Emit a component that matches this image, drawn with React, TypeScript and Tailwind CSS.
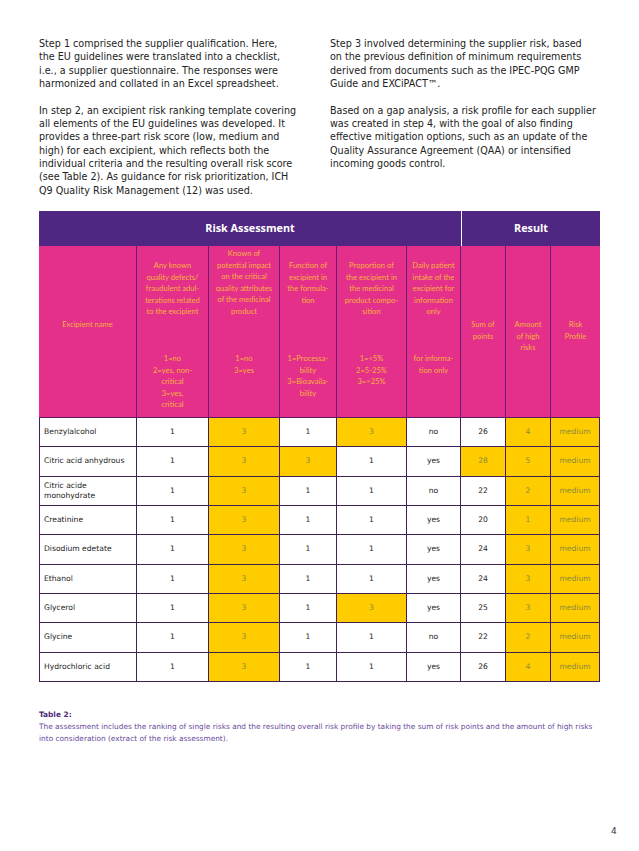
import React from "react";

const widths = "grid-cols-[98px_72px_71px_57px_70px_54px_45px_45px_49px]";

type Cell = { v: string; y?: boolean };
const rows: { name: string[]; cells: Cell[] }[] = [
  { name: ["Benzylalcohol"], cells: [{ v: "1" }, { v: "3", y: true }, { v: "1" }, { v: "3", y: true }, { v: "no" }, { v: "26" }, { v: "4", y: true }, { v: "medium", y: true }] },
  { name: ["Citric acid anhydrous"], cells: [{ v: "1" }, { v: "3", y: true }, { v: "3", y: true }, { v: "1" }, { v: "yes" }, { v: "28", y: true }, { v: "5", y: true }, { v: "medium", y: true }] },
  { name: ["Citric acide", "monohydrate"], cells: [{ v: "1" }, { v: "3", y: true }, { v: "1" }, { v: "1" }, { v: "no" }, { v: "22" }, { v: "2", y: true }, { v: "medium", y: true }] },
  { name: ["Creatinine"], cells: [{ v: "1" }, { v: "3", y: true }, { v: "1" }, { v: "1" }, { v: "yes" }, { v: "20" }, { v: "1", y: true }, { v: "medium", y: true }] },
  { name: ["Disodium edetate"], cells: [{ v: "1" }, { v: "3", y: true }, { v: "1" }, { v: "1" }, { v: "yes" }, { v: "24" }, { v: "3", y: true }, { v: "medium", y: true }] },
  { name: ["Ethanol"], cells: [{ v: "1" }, { v: "3", y: true }, { v: "1" }, { v: "1" }, { v: "yes" }, { v: "24" }, { v: "3", y: true }, { v: "medium", y: true }] },
  { name: ["Glycerol"], cells: [{ v: "1" }, { v: "3", y: true }, { v: "1" }, { v: "3", y: true }, { v: "yes" }, { v: "25" }, { v: "3", y: true }, { v: "medium", y: true }] },
  { name: ["Glycine"], cells: [{ v: "1" }, { v: "3", y: true }, { v: "1" }, { v: "1" }, { v: "no" }, { v: "22" }, { v: "2", y: true }, { v: "medium", y: true }] },
  { name: ["Hydrochloric acid"], cells: [{ v: "1" }, { v: "3", y: true }, { v: "1" }, { v: "1" }, { v: "yes" }, { v: "26" }, { v: "4", y: true }, { v: "medium", y: true }] },
];

const headCols: { top: string[]; bottom: string[]; pt: string; h: string }[] = [
  { top: ["Any known", "quality defects/", "fraudulent adul-", "terations related", "to the excipient"], bottom: ["1=no", "2=yes, non-", "critical", "3=yes,", "critical"], pt: "pt-[14px]", h: "h-[93px]" },
  { top: ["Known of", "potential impact", "on the critical", "quality attributes", "of the medicinal", "product"], bottom: ["1=no", "3=yes"], pt: "pt-[2px]", h: "h-[105px]" },
  { top: ["Function of", "excipient in", "the formula-", "tion"], bottom: ["1=Processa-", "bility", "3=Bioavaila-", "bility"], pt: "pt-[14px]", h: "h-[93px]" },
  { top: ["Proportion of", "the excipient in", "the medicinal", "product compo-", "sition"], bottom: ["1=<5%", "2=5-25%", "3=>25%"], pt: "pt-[14px]", h: "h-[93px]" },
  { top: ["Daily patient", "intake of the", "excipient for", "information", "only"], bottom: ["for informa-", "tion only"], pt: "pt-[14px]", h: "h-[93px]" },
];

const midCols: string[][] = [["Sum of", "points"], ["Amount", "of high", "risks"], ["Risk", "Profile"]];

function Lines({ lines }: { lines: string[] }) {
  return (
    <>
      {lines.map((l, i) => (
        <div key={i} className="whitespace-nowrap">
          {l}
        </div>
      ))}
    </>
  );
}

export default function App() {
  return (
    <div className="w-[639px] h-[851px] bg-white relative overflow-hidden font-['DejaVu_Sans',sans-serif]">
      {/* intro text */}
      <div className="h-[211px] pt-[37px] pl-[39px] flex text-[9.6px] leading-[13.35px] text-[#222]">
        <div className="w-[291px] flex flex-col gap-[13.35px]">
          <p>
            Step 1 comprised the supplier qualification. Here,<br />
            the EU guidelines were translated into a checklist,<br />
            i.e., a supplier questionnaire. The responses were<br />
            harmonized and collated in an Excel spreadsheet.
          </p>
          <p>
            In step 2, an excipient risk ranking template covering<br />
            all elements of the EU guidelines was developed. It<br />
            provides a three-part risk score (low, medium and<br />
            high) for each excipient, which reflects both the<br />
            individual criteria and the resulting overall risk score<br />
            (see Table 2). As guidance for risk prioritization, ICH<br />
            Q9 Quality Risk Management (12) was used.
          </p>
        </div>
        <div className="flex-1 flex flex-col gap-[13.35px]">
          <p>
            Step 3 involved determining the supplier risk, based<br />
            on the previous definition of minimum requirements<br />
            derived from documents such as the IPEC-PQG GMP<br />
            Guide and EXCiPACT™.
          </p>
          <p>
            Based on a gap analysis, a risk profile for each supplier<br />
            was created in step 4, with the goal of also finding<br />
            effective mitigation options, such as an update of the<br />
            Quality Assurance Agreement (QAA) or intensified<br />
            incoming goods control.
          </p>
        </div>
      </div>

      {/* table */}
      <div className="ml-[39px] w-[561px]">
        <div className={`grid ${widths} h-[35px] bg-[#4f2682] text-white font-bold text-[10.8px] font-['Open_Sans',sans-serif]`}>
          <div className="col-span-6 flex items-center justify-center">Risk Assessment</div>
          <div className="col-span-3 flex items-center justify-center border-l border-white">Result</div>
        </div>
        <div className={`grid ${widths} h-[172px] bg-[#e4308b] text-[#f8b03a] text-[7.6px] leading-[11.6px] font-['Lato',sans-serif] text-center border-b border-[#5c1a66]`}>
          <div className="border-r border-[#6b1d72] pt-[73px]">
            <Lines lines={["Excipient name"]} />
          </div>
          {headCols.map((c, i) => (
            <div key={i} className={`border-r border-[#6b1d72] ${c.pt}`}>
              <div className={c.h}>
                <Lines lines={c.top} />
              </div>
              <Lines lines={c.bottom} />
            </div>
          ))}
          {midCols.map((c, i) => (
            <div key={i} className={`pt-[73px] ${i < 2 ? "border-r border-[#6b1d72]" : ""}`}>
              <Lines lines={c} />
            </div>
          ))}
        </div>
        <div className="text-[7.6px] leading-[10px] font-['DejaVu_Sans',sans-serif]">
          {rows.map((r, ri) => (
            <div key={ri} className={`grid ${widths} h-[29.33px]`}>
              <div className="border-l border-r border-b border-[#3e2150] flex flex-col justify-center pl-[4px] text-[#222]">
                <Lines lines={r.name} />
              </div>
              {r.cells.map((c, ci) => (
                <div
                  key={ci}
                  className={`border-r border-b border-[#3e2150] flex items-center justify-center ${
                    c.y ? "bg-[#ffcc00] text-[#8c8a3c]" : "bg-white text-[#222]"
                  }`}
                >
                  {c.v}
                </div>
              ))}
            </div>
          ))}
        </div>
      </div>

      {/* caption */}
      <div className="ml-[39px] mt-[27px] w-[580px] text-[7.4px] leading-[12px] font-['DejaVu_Sans',sans-serif]">
        <div className="font-bold text-[#4a2a78]">Table 2:</div>
        <div className="text-[#6a4a9c]">
          The assessment includes the ranking of single risks and the resulting overall risk profile by taking the sum of risk points and the amount of high risks
          <br />
          into consideration (extract of the risk assessment).
        </div>
      </div>

      <div className="absolute left-[611px] top-[825px] text-[9px] text-[#333] font-['DejaVu_Sans',sans-serif]">4</div>
    </div>
  );
}
